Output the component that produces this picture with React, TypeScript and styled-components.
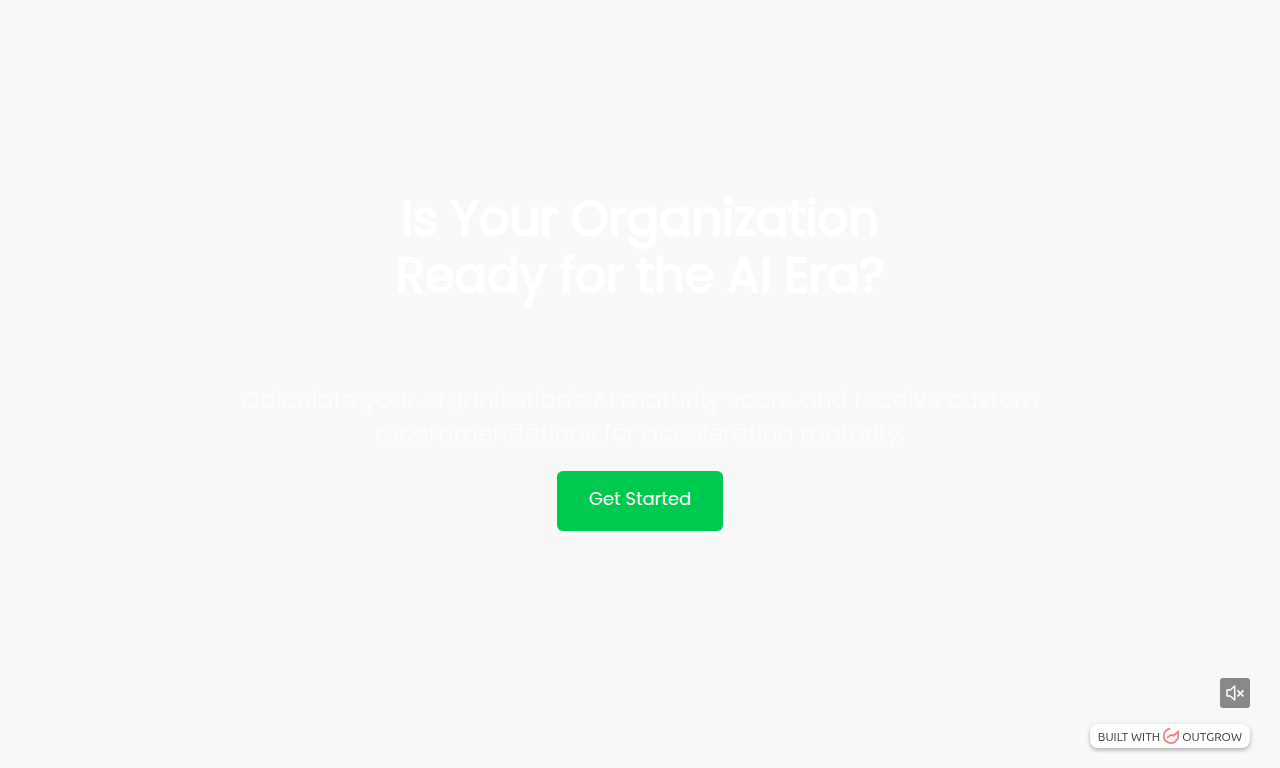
import React from "react";
import styled, { createGlobalStyle } from "styled-components";

const GlobalStyle = createGlobalStyle`
  *, *::before, *::after { box-sizing: border-box; }
  body {
    margin: 0;
    background: #f8f8f8;
    font-family: Poppins, Inter, "Liberation Sans", sans-serif;
  }
`;

const Page = styled.div`
  min-height: 100vh;
  display: flex;
  flex-direction: column;
`;

const Hero = styled.main`
  flex: 1;
  display: flex;
  flex-direction: column;
  align-items: center;
  padding: 190px 24px 0;
  text-align: center;
`;

const Title = styled.h1`
  margin: 0;
  max-width: 640px;
  color: #fff;
  font-size: 48px;
  font-weight: 400;
  line-height: 57px;
  -webkit-text-stroke: 2px #fff;
`;

const Subtitle = styled.p`
  margin: 79px 0 0;
  max-width: 840px;
  color: #fdfdfd;
  font-size: 24px;
  font-weight: 300;
  line-height: 33px;
`;

const StartButton = styled.button`
  margin-top: 22px;
  height: 60px;
  padding: 0 32px 6px;
  border: 0;
  border-radius: 6px;
  background: #00c94f;
  color: #fff;
  font: inherit;
  font-size: 18px;
  cursor: pointer;
`;

const Corner = styled.div`
  position: fixed;
  right: 30px;
  bottom: 20px;
  display: flex;
  flex-direction: column;
  align-items: flex-end;
  gap: 16px;
`;

const MuteButton = styled.button`
  display: flex;
  align-items: center;
  justify-content: center;
  width: 30px;
  height: 30px;
  padding: 0;
  border: 0;
  border-radius: 3px;
  background: #888;
  cursor: pointer;
`;

const Badge = styled.a`
  display: flex;
  align-items: center;
  gap: 2px;
  height: 24px;
  padding: 0 8px;
  border-radius: 8px;
  background: #fff;
  box-shadow: 0 2px 4px rgba(0, 0, 0, 0.3);
  color: #333;
  font-family: Ubuntu, "Noto Sans", sans-serif;
  font-size: 12px;
  line-height: 16px;
  text-decoration: none;
`;

const BadgeLabel = styled.span`
  padding-top: 2px;
`;

function MutedIcon() {
  return (
    <svg width="20" height="20" viewBox="0 0 20 20" fill="none" stroke="#fff" strokeWidth="1.5" aria-hidden="true">
      <path d="M2 7h3.3L9.7 3v14l-4.4-4H2z" strokeLinejoin="round" />
      <path d="M12.4 7.3l6 6M18.4 7.3l-6 6" strokeWidth="1.7" />
    </svg>
  );
}

function OutgrowLogo() {
  return (
    <svg width="18" height="18" viewBox="0 0 18 18" fill="none" stroke="#fb7b80" strokeWidth="1.8" aria-hidden="true">
      <path d="M8.4 1.7A7.2 7.2 0 1 0 16.2 8.6V4.3L11.8 8.5 8.8 8 5 10.9" strokeLinejoin="round" />
    </svg>
  );
}

export default function App() {
  return (
    <Page>
      <GlobalStyle />
      <Hero>
        <Title>
          Is Your Organization
          <br />
          Ready for the AI Era?
        </Title>
        <Subtitle>
          Calculate your organization's AI maturity score and receive custom recommendations for accelerating maturity.
        </Subtitle>
        <StartButton type="button">Get Started</StartButton>
      </Hero>
      <Corner>
        <MuteButton type="button" aria-label="Unmute">
          <MutedIcon />
        </MuteButton>
        <Badge href="#outgrow">
          <BadgeLabel>BUILT WITH</BadgeLabel>
          <OutgrowLogo />
          <BadgeLabel>OUTGROW</BadgeLabel>
        </Badge>
      </Corner>
    </Page>
  );
}
